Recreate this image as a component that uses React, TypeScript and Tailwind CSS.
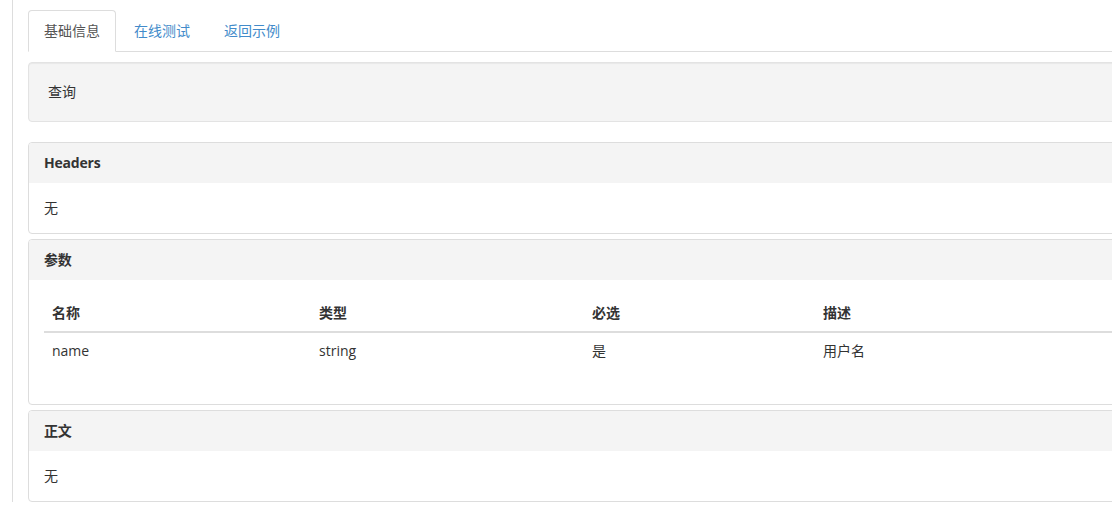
const font = { fontFamily: '"Open Sans", "Noto Sans CJK SC", sans-serif' };

function Panel({ title, children }: { title: string; children: React.ReactNode }) {
	return (
		<div className="mb-[5px] rounded-[4px] border border-[#dddddd] bg-white">
			<div className="rounded-t-[3px] bg-[#f4f4f4] px-[15px] py-[10px] text-[14px] font-bold leading-[20px] tracking-[-0.2px] text-[#333333]">
				{title}
			</div>
			<div className="p-[15px]">{children}</div>
		</div>
	);
}

const params = [{ name: 'name', type: 'string', required: '是', desc: '用户名' }];

export default function App() {
	return (
		<div
			className="h-[505px] w-[1112px] overflow-hidden bg-white text-[14px] leading-[20px] text-[#333333]"
			style={font}
		>
			<div className="ml-[12px] h-[502px] w-[1160px] border-l border-[#dddddd] pl-[15px] pt-[10px]">
				{/* tabs */}
				<ul className="flex border-b border-[#dddddd]">
					<li className="-mb-px mr-[2px]">
						<span className="block rounded-t-[4px] border border-[#dddddd] border-b-transparent bg-white px-[15px] py-[10px] text-[#555555]">
							基础信息
						</span>
					</li>
					<li className="-mb-px mr-[2px]">
						<span className="block border border-transparent px-[15px] py-[10px] text-[#428bca]">在线测试</span>
					</li>
					<li className="-mb-px mr-[2px]">
						<span className="block border border-transparent px-[15px] py-[10px] text-[#428bca]">返回示例</span>
					</li>
				</ul>

				<div className="mt-[10px]">
					<div className="mb-[20px] rounded-[4px] border border-[#e3e3e3] bg-[#f4f4f4] p-[19px] shadow-[inset_0_1px_1px_rgba(0,0,0,0.05)]">
						查询
					</div>

					<Panel title="Headers">无</Panel>

					<Panel title="参数">
						<table className="mb-[20px] w-full border-collapse text-left">
							<thead>
								<tr>
									<th className="w-[267px] border-b-2 border-[#dddddd] p-[8px] font-bold">名称</th>
									<th className="w-[273px] border-b-2 border-[#dddddd] p-[8px] font-bold">类型</th>
									<th className="w-[231px] border-b-2 border-[#dddddd] p-[8px] font-bold">必选</th>
									<th className="border-b-2 border-[#dddddd] p-[8px] font-bold">描述</th>
								</tr>
							</thead>
							<tbody>
								{params.map((p) => (
									<tr key={p.name}>
										<td className="p-[8px]">{p.name}</td>
										<td className="p-[8px]">{p.type}</td>
										<td className="p-[8px]">{p.required}</td>
										<td className="p-[8px]">{p.desc}</td>
									</tr>
								))}
							</tbody>
						</table>
					</Panel>

					<Panel title="正文">无</Panel>
				</div>
			</div>
		</div>
	);
}
